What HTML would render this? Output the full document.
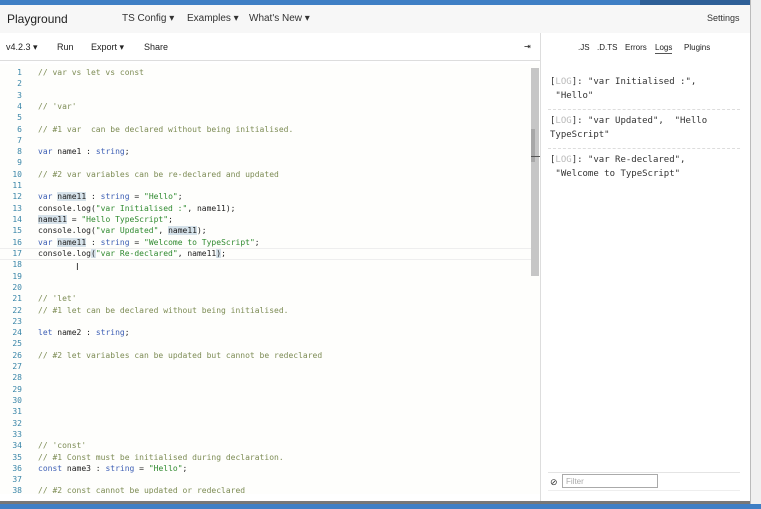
<!DOCTYPE html>
<html><head><meta charset="utf-8"><style>
*{margin:0;padding:0;box-sizing:border-box}
body{width:761px;height:509px;overflow:hidden;background:#fff;font-family:"Liberation Sans",sans-serif;position:relative}
.top{position:absolute;left:0;top:0;width:761px;height:5px;background:#3f7fc5}
.top2{position:absolute;left:640px;top:0;width:120px;height:5px;background:#2e5f97}
.nav{position:absolute;left:0;top:5px;width:750px;height:28px;background:#f7f7f7}
.nav span{position:absolute;top:8px;font-size:10px;color:#333}
.bar{position:absolute;left:0;top:33px;width:540px;height:28px;background:#fff;border-bottom:1px solid #ddd}
.bar span{position:absolute;top:9px;font-size:9px;color:#222}
.rs{position:absolute;left:750px;top:0;width:11px;height:509px;background:#f0f0f0;border-left:1px solid #bbb}
.ed{position:absolute;left:0;top:64px;width:540px;height:430px;background:#fefefc;overflow:hidden}
.ln{position:absolute;left:0;width:22px;text-align:right;font:8px "DejaVu Sans Mono",monospace;color:#3a86a8}
.cd{position:absolute;left:38px;font:8px "DejaVu Sans Mono",monospace;color:#222;white-space:pre}
.c{color:#7d8c55}.k{color:#3d5fb5}.s{color:#2f8a2f}.h{background:#d6e2ea}
.sb{position:absolute;left:531px;top:68px;width:8px;height:208px;background:#c6c6c6}
.mk{position:absolute;left:531px;top:129px;width:4px;height:33px;background:#a8a8a8}
.div{position:absolute;left:540px;top:33px;width:1px;height:468px;background:#ddd}
.rp{position:absolute;left:541px;top:33px;width:209px;height:468px;background:#fff}
.tab{position:absolute;top:43px;font-size:8px;color:#222}
.log{position:absolute;left:550px;font:9px "DejaVu Sans Mono",monospace;color:#333;line-height:14px;white-space:pre}
.log i{font-style:normal;color:#bbb}
.sep{position:absolute;left:548px;width:192px;border-top:1px dashed #ddd}
.bot{position:absolute;left:0;top:501px;width:750px;height:3px;background:#777}
.bot2{position:absolute;left:0;top:504px;width:761px;height:5px;background:#3f7fc5}
</style></head><body>
<div class="top"></div><div class="top2"></div>
<div class="nav">
<span style="left:7px;font-size:12px;top:7px;color:#222">Playground</span>
<span style="left:122px">TS Config ▾</span>
<span style="left:187px">Examples ▾</span>
<span style="left:249px">What's New ▾</span>
<span style="left:707px;font-size:9px">Settings</span>
</div>
<div class="bar">
<span style="left:6px">v4.2.3 ▾</span>
<span style="left:57px">Run</span>
<span style="left:91px">Export ▾</span>
<span style="left:144px">Share</span>
<span style="left:524px;font-size:8px">⇥</span>
</div>
<div class="div"></div>
<div class="rp"></div>
<span class="tab" style="left:578px">.JS</span><span class="tab" style="left:597px">.D.TS</span><span class="tab" style="left:625px">Errors</span>
<span class="tab" style="left:655px;border-bottom:1px solid #555;padding-bottom:1px">Logs</span><span class="tab" style="left:684px">Plugins</span>
<div class="log" style="top:75px">[<i>LOG</i>]: "var Initialised :",
 "Hello"</div>
<div class="sep" style="top:109px"></div>
<div class="log" style="top:114px">[<i>LOG</i>]: "var Updated",  "Hello
TypeScript"</div>
<div class="sep" style="top:148px"></div>
<div class="log" style="top:153px">[<i>LOG</i>]: "var Re-declared",
 "Welcome to TypeScript"</div>
<div style="position:absolute;left:548px;top:472px;width:192px;border-top:1px solid #e4e4e4"></div>
<div style="position:absolute;left:550px;top:477px;font-size:9px;color:#333">⊘</div>
<div style="position:absolute;left:562px;top:474px;width:96px;height:14px;border:1px solid #aaa;font-size:8px;color:#aaa;padding:2px 3px">Filter</div>
<div style="position:absolute;left:548px;top:490px;width:192px;border-top:1px solid #eee"></div>
<div class="ed" id="ed"></div>
<div style="position:absolute;left:0;top:248px;width:531px;height:12px;border-top:1px solid #eee;border-bottom:1px solid #eee"></div>
<div class="sb"></div><div class="mk"></div>
<div style="position:absolute;left:531px;top:156px;width:9px;height:1px;background:#555"></div>
<div style="position:absolute;left:76px;top:262px;font-size:10px;color:#333">I</div>
<div class="rs"></div>
<div class="bot"></div><div class="bot2"></div>
<script>
var L=["<span class=c>// var vs let vs const</span>","","","<span class=c>// 'var'</span>","","<span class=c>// #1 var  can be declared without being initialised.</span>","","<span class=k>var</span> name1 : <span class=k>string</span>;","","<span class=c>// #2 var variables can be re-declared and updated</span>","",
"<span class=k>var</span> <span class=h>name11</span> : <span class=k>string</span> = <span class=s>\"Hello\"</span>;",
"console.log(<span class=s>\"var Initialised :\"</span>, name11);",
"<span class=h>name11</span> = <span class=s>\"Hello TypeScript\"</span>;",
"console.log(<span class=s>\"var Updated\"</span>, <span class=h>name11</span>);",
"<span class=k>var</span> <span class=h>name11</span> : <span class=k>string</span> = <span class=s>\"Welcome to TypeScript\"</span>;",
"console.log<span class=h>(</span><span class=s>\"var Re-declared\"</span>, name11<span class=h>)</span>;",
"","","","<span class=c>// 'let'</span>","<span class=c>// #1 let can be declared without being initialised.</span>","","<span class=k>let</span> name2 : <span class=k>string</span>;","","<span class=c>// #2 let variables can be updated but cannot be redeclared</span>","","","","","","","","<span class=c>// 'const'</span>","<span class=c>// #1 Const must be initialised during declaration.</span>","<span class=k>const</span> name3 : <span class=k>string</span> = <span class=s>\"Hello\"</span>;","","<span class=c>// #2 const cannot be updated or redeclared</span>"];
var h="";for(var i=0;i<L.length;i++){var t=4+i*11.31;h+='<div class="ln" style="top:'+t+'px">'+(i+1)+'</div><div class="cd" style="top:'+t+'px">'+L[i]+'</div>';}
document.getElementById('ed').innerHTML=h;
</script>
</body></html>
